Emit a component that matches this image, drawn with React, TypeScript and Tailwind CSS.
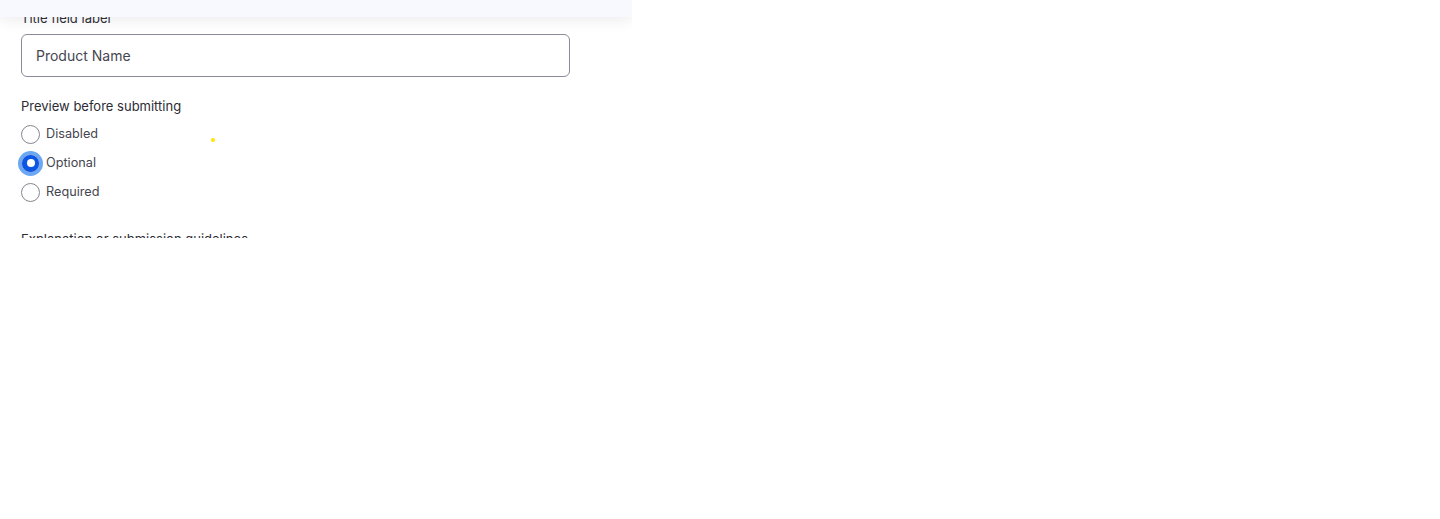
import React, { useState } from 'react';

const font = { fontFamily: 'Inter, "Noto Sans", sans-serif' };

const options = ['Disabled', 'Optional', 'Required'];

const App: React.FC = () => {
  const [preview, setPreview] = useState('Optional');
  const [title, setTitle] = useState('Product Name');

  return (
    <div className="w-full min-h-[519px] bg-white" style={font}>
      <div className="relative w-[632px] h-[238px] overflow-hidden bg-white">
        {/* sticky header strip */}
        <div className="absolute inset-x-0 top-0 h-[17px] bg-[#f8f9fe] shadow-[0_4px_14px_rgba(0,0,0,0.07)] z-10" />

        <div className="flex flex-col px-[21px] pt-[8px]">
          <label className="text-[13px] leading-[20px] text-[#303039]">Title field label</label>
          <input
            value={title}
            onChange={(e) => setTitle(e.target.value)}
            className="mt-[6px] w-[549px] h-[43px] rounded-[6px] border border-[#8a8b98] px-[14px] text-[14px] text-[#45454f] outline-none"
          />

          <div className="mt-[19px] text-[13px] leading-[20px] text-[#2c2c35]">Preview before submitting</div>
          <div className="mt-[9px] flex flex-col gap-[11px]">
            {options.map((opt) => {
              const on = preview === opt;
              return (
                <label key={opt} className="flex items-center gap-[6px] cursor-pointer h-[18px]">
                  <span
                    onClick={() => setPreview(opt)}
                    className={`w-[19px] h-[19px] rounded-full flex items-center justify-center shrink-0 ${
                      on
                        ? 'bg-[#0b57e3] border border-[#8aa6e6] ring-[3px] ring-[#6aa8f3]'
                        : 'border border-[#85868f] bg-white'
                    }`}
                  >
                    {on && <span className="w-[8px] h-[8px] rounded-full bg-white" />}
                  </span>
                  <span className="text-[12.7px] text-[#45454f]">{opt}</span>
                </label>
              );
            })}
          </div>

          <div className="mt-[28px] text-[13px] leading-[20px] text-[#2c2c35]">Explanation or submission guidelines</div>
        </div>

        <span className="absolute left-[211px] top-[138px] w-[4px] h-[4px] rounded-full bg-[#ffe500]" />
      </div>
    </div>
  );
};

export default App;
